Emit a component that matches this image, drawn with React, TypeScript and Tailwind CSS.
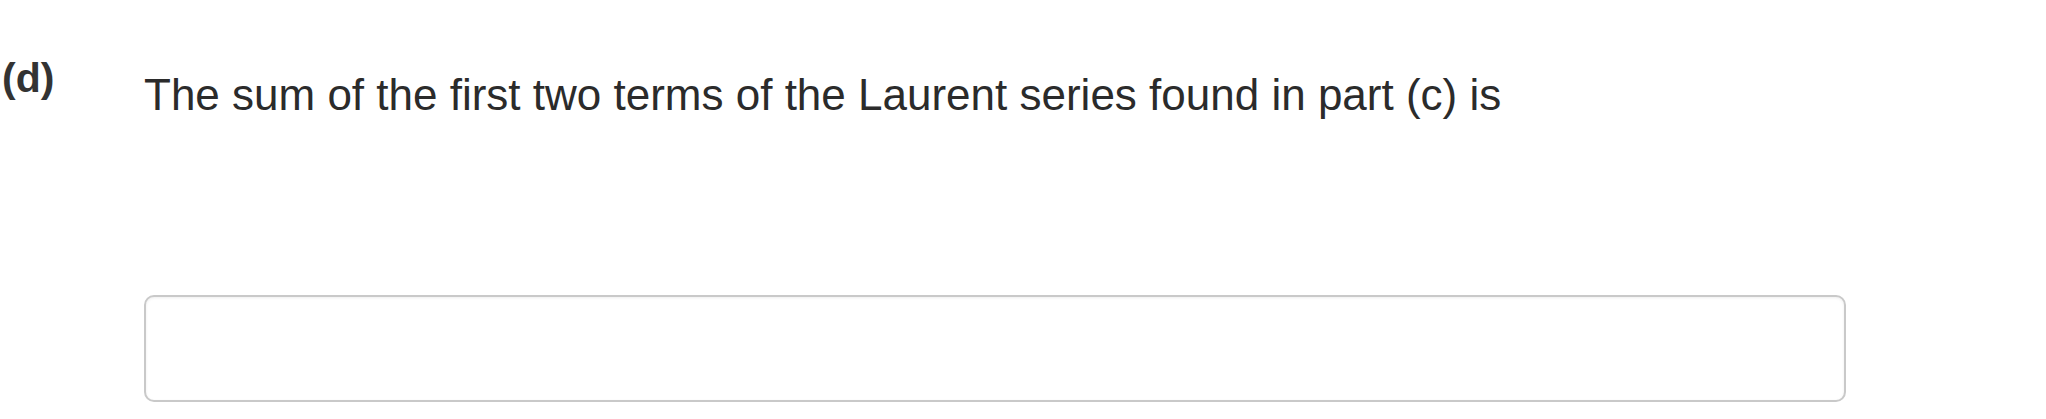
export default function App() {
  return (
    <div className="flex min-h-[419px] w-[2046px] bg-white font-['Liberation_Sans',Arial,sans-serif]">
      {/* part label */}
      <div className="w-[144px] shrink-0 pl-[2px] pt-[52px] text-[41px] font-bold leading-[52px] text-[#333]">
        (d)
      </div>

      <div className="flex flex-col pt-[69px]">
        <p className="text-[44px] leading-[52px] text-[#2b2b2b]">
          The sum of the first two terms of the Laurent series found in part (c) is
        </p>
        <input
          type="text"
          className="mt-[174px] h-[107px] w-[1702px] rounded-[10px] border-2 border-[#c9c9c9] bg-white shadow-[inset_0_1px_3px_rgba(0,0,0,0.07)] outline-none"
        />
      </div>
    </div>
  );
}
